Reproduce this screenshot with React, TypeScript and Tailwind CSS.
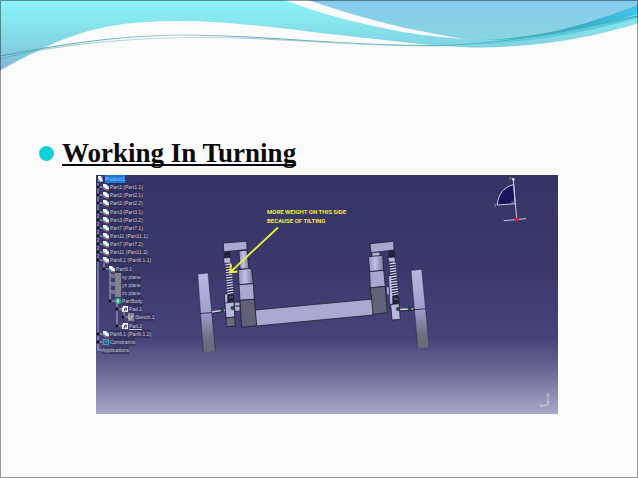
import React from 'react';
import clsx from 'clsx';

type NodeKind = 'root' | 'part' | 'plane' | 'body' | 'pad' | 'sketch' | 'constraints' | 'plain';

interface TreeNode {
  label: string;
  kind: NodeKind;
  indent: string;
  knob?: boolean;
  underline?: boolean;
}

const TREE: TreeNode[] = [
  { label: 'Product1', kind: 'root', indent: 'pl-px' },
  { label: 'Part1 (Part1.1)', kind: 'part', indent: 'pl-0', knob: true },
  { label: 'Part2 (Part2.1)', kind: 'part', indent: 'pl-0', knob: true },
  { label: 'Part2 (Part2.2)', kind: 'part', indent: 'pl-0', knob: true },
  { label: 'Part3 (Part3.1)', kind: 'part', indent: 'pl-0', knob: true },
  { label: 'Part3 (Part3.2)', kind: 'part', indent: 'pl-0', knob: true },
  { label: 'Part7 (Part7.1)', kind: 'part', indent: 'pl-0', knob: true },
  { label: 'Part11 (Part11.1)', kind: 'part', indent: 'pl-0', knob: true },
  { label: 'Part7 (Part7.2)', kind: 'part', indent: 'pl-0', knob: true },
  { label: 'Part11 (Part11.2)', kind: 'part', indent: 'pl-0', knob: true },
  { label: 'Part6.1 (Part6.1.1)', kind: 'part', indent: 'pl-0', knob: true },
  { label: 'Part6.1', kind: 'part', indent: 'pl-1.5', knob: true },
  { label: 'xy plane', kind: 'plane', indent: 'pl-3' },
  { label: 'yz plane', kind: 'plane', indent: 'pl-3' },
  { label: 'zx plane', kind: 'plane', indent: 'pl-3' },
  { label: 'PartBody', kind: 'body', indent: 'pl-3', knob: true },
  { label: 'Pad.1', kind: 'pad', indent: 'pl-[19px]', knob: true },
  { label: 'Sketch.1', kind: 'sketch', indent: 'pl-[25px]', knob: true },
  { label: 'Pad.2', kind: 'pad', indent: 'pl-[19px]', knob: true, underline: true },
  { label: 'Part6.1 (Part6.1.2)', kind: 'part', indent: 'pl-0', knob: true },
  { label: 'Constraints', kind: 'constraints', indent: 'pl-0', knob: true },
  { label: 'Applications', kind: 'plain', indent: 'pl-1.5' },
];

function NodeIcon({ kind, knob }: { kind: NodeKind; knob?: boolean }) {
  if (kind === 'plain') return null;
  if (kind === 'root') {
    return (
      <svg viewBox="0 0 7 8" className="w-[7px] h-2 shrink-0" aria-hidden="true">
        <path d="M1 1h3l2 5-2 1-3-3z" fill="#f4f6fb" />
        <path d="M1 3l3 4H1z" fill="#7d97b8" />
        <path d="M4 1l2 0v3z" fill="#3d74b0" />
      </svg>
    );
  }
  return (
    <svg viewBox="0 0 13 8" className="w-[13px] h-2 shrink-0" aria-hidden="true">
      <path d="M3 4h4" stroke="#c9c9dc" strokeWidth="0.8" />
      {knob && <circle cx="2" cy="4" r="1.7" fill="#0c0c1c" stroke="#6a6a88" strokeWidth="0.3" />}
      {kind === 'part' && (
        <>
          <path d="M7 1h3l3 3v3h-3l-3-3z" fill="#eef3fa" />
          <path d="M7 3l3 3-1 1-2-1z" fill="#3f86c6" />
          <path d="M10 6l3 0v1.5h-3z" fill="#d0604c" />
        </>
      )}
      {kind === 'plane' && (
        <>
          <path d="M7 0h6v8H7z" fill="#85858f" />
          <path d="M7.500 5l1.500-2h3.500l-1.500 2z" fill="#a3a39a" stroke="#5f5f6c" strokeWidth="0.5" />
        </>
      )}
      {kind === 'body' && (
        <>
          <circle cx="10" cy="4" r="3" fill="#35b58a" />
          <path d="M9 2l2 1v2l-1 1-1-1z" fill="#a4e8c8" />
        </>
      )}
      {kind === 'pad' && (
        <>
          <path d="M8 1h5v6H7V4z" fill="#f2f2f8" />
          <path d="M9 6.500L10 3h1.500v2H9.500" fill="none" stroke="#22223a" strokeWidth="0.8" />
        </>
      )}
      {kind === 'sketch' && (
        <>
          <path d="M7 0h6v8H7z" fill="#85858f" />
          <path d="M8 2v4h2M10 5l2-3" fill="none" stroke="#e4e4ee" strokeWidth="0.8" />
        </>
      )}
      {kind === 'constraints' && (
        <>
          <path d="M7 1h6v6H7z" fill="#3a9bc4" />
          <path d="M8.500 2.500h3M8.500 4h3v1.500h-3z" fill="none" stroke="#1c4a6c" strokeWidth="0.7" />
        </>
      )}
    </svg>
  );
}

function SpecTree() {
  return (
    <ul className="absolute top-0 left-0 h-3/4 flex flex-col justify-between font-['Liberation_Sans',sans-serif] text-[5px] leading-[8px] text-[#c6c6d8]">
      {TREE.map((node) => (
        <li key={node.label} className={clsx('flex items-center gap-px whitespace-nowrap', node.indent)}>
          <NodeIcon kind={node.kind} knob={node.knob} />
          <span
            className={clsx(
              node.kind === 'root' && 'bg-[#1f78d8] text-[#8fd0ff]',
              node.kind !== 'root' && 'bg-[#2c2b55]/60',
              node.underline && 'underline'
            )}
          >
            {node.label}
          </span>
        </li>
      ))}
    </ul>
  );
}

function Waves() {
  return (
    <svg viewBox="0 0 638 72" className="block w-full" aria-hidden="true">
      <defs>
        <linearGradient id="cyan" x1="0" y1="0" x2="0" y2="72" gradientUnits="userSpaceOnUse">
          <stop offset="0" stopColor="#8af4f8" />
          <stop offset="0.3" stopColor="#87e6ee" />
          <stop offset="0.62" stopColor="#83d3e3" />
          <stop offset="1" stopColor="#80b4da" />
        </linearGradient>
        <linearGradient id="blue" x1="0" y1="0" x2="0" y2="40" gradientUnits="userSpaceOnUse">
          <stop offset="0" stopColor="#86cbee" />
          <stop offset="1" stopColor="#88d5e0" />
        </linearGradient>
        <linearGradient id="strand" x1="455" y1="0" x2="638" y2="0" gradientUnits="userSpaceOnUse">
          <stop offset="0" stopColor="#6fcfd6" />
          <stop offset="0.3" stopColor="#36b3ba" />
          <stop offset="0.7" stopColor="#38afc8" />
          <stop offset="1" stopColor="#42c6ea" />
        </linearGradient>
        <linearGradient id="thread" x1="0" y1="0" x2="638" y2="0" gradientUnits="userSpaceOnUse">
          <stop offset="0" stopColor="#4b9fae" />
          <stop offset="0.12" stopColor="#55b0b0" />
          <stop offset="0.28" stopColor="#a9c8d6" />
          <stop offset="0.42" stopColor="#5f9fbe" />
          <stop offset="0.55" stopColor="#7fc3bd" />
          <stop offset="0.75" stopColor="#4bb3bd" />
          <stop offset="1" stopColor="#3ba7c4" />
        </linearGradient>
      </defs>
      <path
        d="M0 0H285C315 12 350 22 403 32C425 35.500 450 38 463 39C530 41 585 25 638 12V23.500C590 38 540 47 478 47.500C440 47.500 370 38 320 33C270 27 225 21 180 21C100 21 67 34 0 70.500Z"
        fill="url(#cyan)"
      />
      <path d="M308 0H638V6C585 27 545 40 495 40C483 40 473 40 463 39C445 36 425 32 403 27.500C370 19.500 340 11 308 0Z" fill="url(#blue)" />
      <path d="M463 39C525 42 575 29 638 5V14C580 31 530 43 463 39Z" fill="url(#strand)" />
      <path d="M480 44C540 39 590 27 638 15V18C590 31 545 41 480 44Z" fill="#5ccbd9" />
      <path
        d="M0 56C50 47 110 35 190 35C270 36 350 46 440 45.500C520 43 580 28 638 16"
        fill="none"
        stroke="url(#thread)"
        strokeWidth="1"
      />
      <path
        d="M0 59C50 46 110 39 190 37.500C270 36.500 340 46 440 46"
        fill="none"
        stroke="url(#thread)"
        strokeWidth="0.6"
      />
    </svg>
  );
}

// zigzag coil between two points, one turn per `step` units
function coil(x1: number, y1: number, x2: number, y2: number, step: number) {
  const turns = Math.round((y2 - y1) / step);
  return Array.from({ length: turns }, (_, i) => {
    const x = x1 + ((x2 - x1) * i) / turns;
    const y = y1 + step * i;
    return `M${x - 3} ${y + 1}L${x + 3} ${y}`;
  }).join('');
}

function Assembly() {
  return (
    <svg viewBox="96 175 462 239" className="block w-full" role="img" aria-label="Suspension assembly">
      <defs>
        <linearGradient id="sky" x1="0" y1="0" x2="0" y2="1">
          <stop offset="0" stopColor="#353467" />
          <stop offset="0.4" stopColor="#3b396c" />
          <stop offset="0.68" stopColor="#464379" />
          <stop offset="0.8" stopColor="#656290" />
          <stop offset="1" stopColor="#aaa8c8" />
        </linearGradient>
        <linearGradient id="wheel" x1="0" y1="0" x2="0" y2="1">
          <stop offset="0" stopColor="#bab7e2" />
          <stop offset="0.5" stopColor="#a19ecb" />
          <stop offset="0.85" stopColor="#6c6b80" />
          <stop offset="1" stopColor="#6c6b78" />
        </linearGradient>
        <linearGradient id="tube" x1="0" y1="0" x2="1" y2="0">
          <stop offset="0" stopColor="#8f8cba" />
          <stop offset="0.45" stopColor="#c3c1e8" />
          <stop offset="1" stopColor="#77749c" />
        </linearGradient>
      </defs>
      <rect x="96" y="175" width="462" height="239" fill="url(#sky)" />

      {/* tree branches */}
      <g fill="none" stroke="#c9c9dc" strokeWidth="0.8">
        <path d="M98 183V350H102" />
        <path d="M104 263V268" />
        <path d="M110 271V300M110 275H115M110 283H115M110 291H115" />
        <path d="M117 300V325M121 309H124V316" />
      </g>

      <g stroke="#1d1c30" strokeWidth="0.8" strokeLinejoin="round">
        {/* beam */}
        <path d="M255 310L373 299V315L256 326Z" fill="#aaa7d1" />

        {/* left wheel and hub */}
        <path d="M197.700 274L208 273L215.300 351L203.300 352Z" fill="url(#wheel)" stroke="none" />
        <path d="M203.300 352L197.700 274L208 273L215.300 351" fill="none" strokeWidth="0.5" />
        <path d="M200.500 313.500L212 312.500" />
        <path d="M212 312L225 310" stroke="#d5d4e8" strokeWidth="1.500" />
        <path d="M212 313.500L224 311.500" strokeWidth="0.7" />
        <path d="M224.300 294H228V304H225Z" fill="#b5b2da" />
        <path d="M234 302.500L240 302V311L235 311.500Z" fill="#b5b2da" />
        <path d="M225 303L234 302L234.800 317L226 318Z" fill="#b9b6df" />
        <path d="M226 318L234.800 317L235.300 326L226.300 326.700Z" fill="#6b6a80" />
        <path d="M235 306H241" strokeWidth="1" />

        {/* left strut */}
        <path d="M239 251L247 250L249 269H240Z" fill="url(#tube)" />
        <path d="M223.300 243L246.700 241.300L247 249.500L223.700 251.800Z" fill="#aaa7d1" />
        <path d="M238.300 269.700L251.300 268.300L253.300 283.700L239 284.700Z" fill="url(#tube)" />
        <path d="M239 284.700L253.300 283.700L254.300 299.300L240 300.300Z" fill="#a9a6d0" />
        <path d="M240 300.300L254.300 299.300L256.700 325.700L241.700 327.300Z" fill="#626178" />
        <path d="M225 253L230 252V258H224Z" fill="#24233c" />
        <path d="M223.500 258L230.500 257.500L231 263L224 263.500Z" fill="#b9b6df" />
        <path d="M226 263H231L233 296H228Z" fill="#4b486f" stroke="none" />
        <path d={coil(228.5, 264, 230.5, 294, 2.6)} stroke="#d3d1ee" strokeWidth="1.400" />
        <path d={coil(228.5, 265.3, 230.5, 294, 2.6)} strokeWidth="0.8" />
        <path d="M228 295L233 294L234 301L228 302Z" fill="#24233c" />
        <path d="M229 297H233" stroke="#8f8cba" />

        {/* right wheel and hub */}
        <path d="M411 270.500L421.700 269.300L429.300 347.300L417.700 348Z" fill="url(#wheel)" stroke="none" />
        <path d="M417.700 348L411 270.500L421.700 269.300L429.300 347.300" fill="none" strokeWidth="0.5" />
        <path d="M413.500 309.800L425.300 308.800" />
        <path d="M399 309.500L413 309" stroke="#d5d4e8" strokeWidth="1.500" />
        <path d="M399 310.800L413 310.300" strokeWidth="0.7" />

        {/* right strut */}
        <path d="M372 252H380V257H372Z" fill="#b5b2da" />
        <path d="M370 243.700L393.700 241.300L394 250L371 252.700Z" fill="#aaa7d1" />
        <path d="M368.300 256.700L382.700 255.300L383.700 270.300L369.700 271.700Z" fill="url(#tube)" />
        <path d="M369.700 271.700L383.700 270.300L385.300 286.300L370.300 288Z" fill="#a9a6d0" />
        <path d="M370.300 288L385.300 286.300L387.300 312.700L373.300 314.500Z" fill="#626178" />
        <path d="M389 252L394 251L395 257H389Z" fill="#24233c" />
        <path d="M388 257.500L395 257L395.500 262H388.500Z" fill="#b9b6df" />
        <path d="M391 262H396L398 300H392Z" fill="#4b486f" stroke="none" />
        <path d="M388.700 276L392 275.500L393 304L390 304.500Z" fill="#c0bee4" strokeWidth="0.5" />
        <path d="M386.500 287H389V295H387Z" fill="#c0bee4" strokeWidth="0.5" />
        <path d={coil(392.5, 263, 395.5, 297, 2.6)} stroke="#d3d1ee" strokeWidth="1.400" />
        <path d={coil(392.5, 264.3, 395.5, 297, 2.6)} strokeWidth="0.8" />
        <path d="M393 296L398 295L399 303L393 304Z" fill="#24233c" />
        <path d="M394 299H398" stroke="#8f8cba" />
        <path d="M390.700 304.500L399 303.700L400.300 319.300L392 320Z" fill="#b9b6df" />
      </g>
      <g fill="#1f5a36" stroke="#12301f" strokeWidth="0.5">
        <circle cx="222.300" cy="309.500" r="1.800" />
        <circle cx="232.700" cy="308" r="1.800" />
        <circle cx="398" cy="309" r="1.800" />
        <circle cx="409.700" cy="308.500" r="1.800" />
      </g>

      {/* callout */}
      <g fill="#f0ee35" className="font-[Roboto,sans-serif] text-[6px] font-bold">
        <text x="267" y="214">MORE WEIGHT ON THIS SIDE</text>
        <text x="267" y="223">BECAUSE OF TILTING</text>
      </g>
      <path d="M278 227.500L231 271.500M231 264.500L230 272.500L237.500 271.500" fill="none" stroke="#f0ee35" strokeWidth="1.800" />

      {/* compass */}
      <g fill="none" stroke="#cfc6ea" strokeWidth="1">
        <path d="M513.700 184.700C503 187 498 195 497.300 205L515 203.700Z" fill="#17165a" />
        <path d="M513.300 179.500L516.700 219.300M503.700 220.700L526 218.700" />
      </g>
      <circle cx="513.300" cy="179.300" r="1.300" fill="#f1effa" />
      <circle cx="516.700" cy="219.300" r="2" fill="#e01b2c" />
      <g fill="#a8a47c" className="font-['Liberation_Sans',sans-serif] text-[5px]">
        <text x="509" y="180">z</text>
        <text x="494" y="206">y</text>
        <text x="511" y="204">x</text>
      </g>

      {/* axis triad */}
      <g fill="none" stroke="#cfcede" strokeWidth="0.900">
        <path d="M548 393V405L540 406" />
        <path d="M546.500 396L549 394M547 402H549.500M539.500 404L542 406.500" />
      </g>
    </svg>
  );
}

export default function App() {
  return (
    <div className="relative min-h-screen bg-[#fbfbfb]">
      <Waves />
      <main className="pt-16 pb-16">
        <div className="flex items-center gap-2 pl-[39px]">
          <span className="size-[15px] rounded-full bg-[#12d0d9]" />
          <h1 className="font-['Liberation_Serif',serif] text-[27px] leading-[35px] font-bold text-[#0b0b0b] underline decoration-2 underline-offset-2 [text-decoration-skip-ink:none]">
            Working In Turning
          </h1>
        </div>
        <figure className="relative mt-1 ml-24 mr-20">
          <Assembly />
          <SpecTree />
        </figure>
      </main>
      {/* slide edge */}
      <div className="absolute inset-0 border border-black/40 pointer-events-none" />
    </div>
  );
}
